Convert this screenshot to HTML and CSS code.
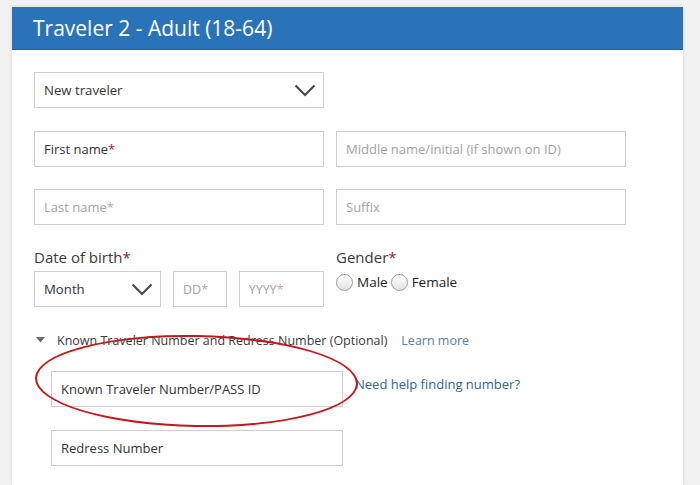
FILE: index.html
```html
<!DOCTYPE html>
<html>
<head>
<meta charset="utf-8">
<link rel="stylesheet" href="styles.css">
</head>
<body>
<div class="card">
  <div class="header">Traveler 2 - Adult (18-64)</div>
  <div class="body">
    <div class="row first">
      <div class="field select wide"><span class="val">New traveler</span><svg class="chev" width="22" height="13" viewBox="0 0 22 13"><path d="M1.5 1.5 L11 11 L20.5 1.5" fill="none" stroke="#4a4a4a" stroke-width="2.2"/></svg></div>
    </div>
    <div class="row">
      <div class="field wide"><span class="val">First name<span class="req">*</span></span></div>
      <div class="field wide"><span class="ph">Middle name/initial (if shown on ID)</span></div>
    </div>
    <div class="row">
      <div class="field wide"><span class="ph">Last name<span class="req light">*</span></span></div>
      <div class="field wide"><span class="ph">Suffix</span></div>
    </div>
    <div class="row dob">
      <div class="group">
        <div class="label">Date of birth<span class="req">*</span></div>
        <div class="dates">
          <div class="field select month"><span class="val">Month</span><svg class="chev" width="22" height="13" viewBox="0 0 22 13"><path d="M1.5 1.5 L11 11 L20.5 1.5" fill="none" stroke="#4a4a4a" stroke-width="2.2"/></svg></div>
          <div class="field dd"><span class="ph sm">DD<span class="req light">*</span></span></div>
          <div class="field yyyy"><span class="ph sm">YYYY<span class="req light">*</span></span></div>
        </div>
      </div>
      <div class="group">
        <div class="label">Gender<span class="req">*</span></div>
        <div class="radios">
          <span class="radio"></span><span class="rlabel">Male</span>
          <span class="radio"></span><span class="rlabel">Female</span>
        </div>
      </div>
    </div>
    <div class="toggle">
      <svg class="tri" width="9" height="6" viewBox="0 0 9 6"><path d="M0 0 H9 L4.5 5.5 Z" fill="#6b6b6b"/></svg>
      <span class="ttext">Known Traveler Number and Redress Number (Optional)</span>
      <span class="learn">Learn more</span>
    </div>
    <div class="sub">
      <div class="row ktn">
        <div class="field wide2"><span class="val">Known Traveler Number/PASS ID</span></div>
        <span class="help">Need help finding number?</span>
      </div>
      <div class="row redress">
        <div class="field wide2"><span class="val">Redress Number</span></div>
      </div>
    </div>
  </div>
  <div class="circle"></div>
</div>
</body>
</html>
```
FILE: styles.css
```css
html, body {
  margin: 0;
  padding: 0;
}
body {
  background: #f2f2f2;
  font-family: "Open Sans", "Liberation Sans", sans-serif;
  color: #333;
  height: 485px;
  overflow: hidden;
}
.card {
  position: relative;
  margin: 7px 17px 0 12px;
  background: #fff;
  height: 478px;
  box-shadow: 0 0 4px rgba(0,0,0,0.12);
}
.header {
  background: #2b73b9;
  color: #fff;
  height: 43px;
  font-size: 21px;
  line-height: 43px;
  padding-left: 21px;
  border-bottom: 1px solid #2465a3;
  box-sizing: border-box;
}
.body {
  padding: 22px 0 0 22px;
}
.row {
  display: flex;
  gap: 12px;
  margin-bottom: 22px;
}
.row.first { margin-bottom: 23px; }
.field {
  box-sizing: border-box;
  height: 36px;
  border: 1px solid #cfcfcf;
  background: #fff;
  display: flex;
  align-items: center;
  padding-left: 9px;
  font-size: 13px;
}
.wide { width: 290px; }
.wide2 { width: 292px; }
.select { justify-content: space-between; padding-right: 7px; }
.select .val { font-size: 13.2px; }
.chev { display: block; }
.val { color: #333; }
.ph { color: #a3a3a3; }
.ph.sm { font-size: 12.5px; }
.req { color: #a6192e; }
.req.light { color: #d39aa2; }
.row.dob { margin-bottom: 0; gap: 12px; }
.group { width: 290px; }
.label {
  font-size: 15px;
  line-height: 20px;
  margin-bottom: 4px;
  color: #3a3a3a;
}
.dates { display: flex; gap: 12px; }
.month { width: 128px; }
.dd { width: 54px; }
.yyyy { width: 86px; }
.radios {
  display: flex;
  align-items: center;
  height: 22px;
  font-size: 13.5px;
}
.radio {
  width: 17px;
  height: 17px;
  border-radius: 50%;
  border: 1px solid #9a9a9a;
  background: linear-gradient(#ffffff, #e2e2e2);
  margin-right: 4px;
  box-sizing: border-box;
}
.rlabel { margin-right: 3px; color: #222; }
.toggle {
  display: flex;
  align-items: center;
  margin-top: 23px;
  margin-left: 2px;
  font-size: 12.5px;
  height: 20px;
}
.tri { margin-right: 12px; }
.ttext { color: #3a3a3a; }
.learn { color: #5a7d99; margin-left: 14px; }
.sub { padding-left: 17px; margin-top: 21px; }
.row.ktn { align-items: flex-start; gap: 12px; margin-bottom: 23px; }
.help {
  color: #2c6597;
  font-size: 13px;
  margin-top: 4px;
}
.circle {
  position: absolute;
  left: 23px;
  top: 328px;
  width: 323px;
  height: 92px;
  box-sizing: border-box;
  border: 2px solid #c4161c;
  border-radius: 50%;
  transform: rotate(1deg);
}
```
